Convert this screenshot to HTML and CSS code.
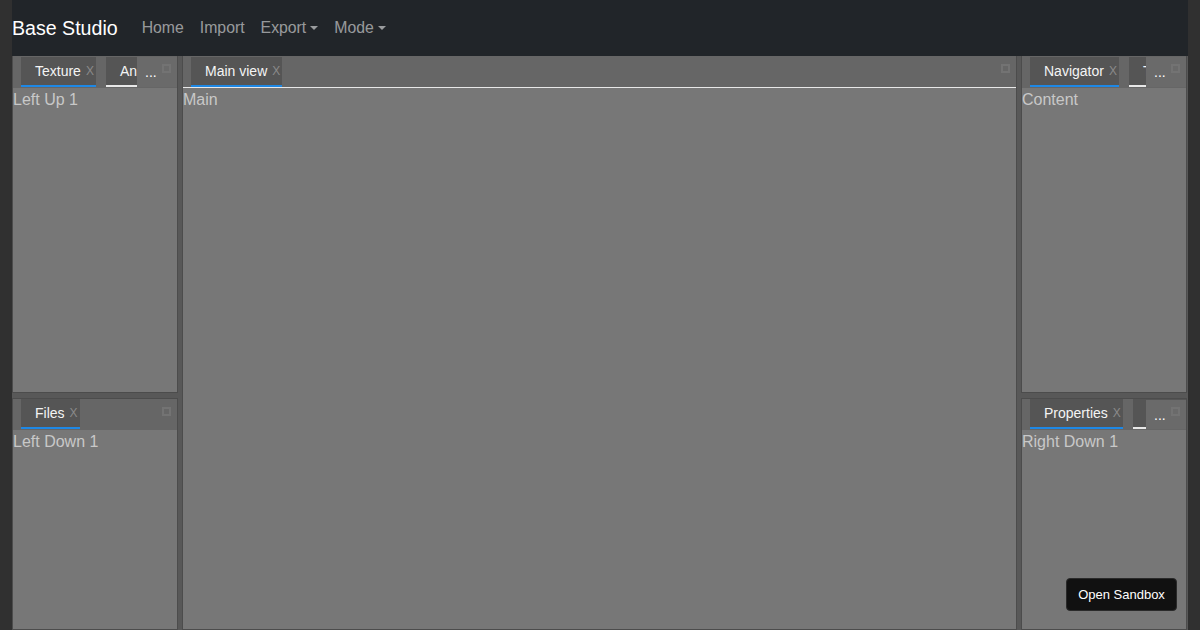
FILE: index.html
```
<html>
<head>
	<link rel="stylesheet" href="styles.css">
</head>
<body>
<div class="page">
	<nav class="navbar">
		<span class="brand">Base Studio</span>
		<a class="nav_link">Home</a>
		<a class="nav_link">Import</a>
		<a class="nav_link dropdown">Export</a>
		<a class="nav_link dropdown">Mode</a>
	</nav>
	<div class="layout">
		<div class="column">
			<div class="panel top">
				<div class="tabbar">
					<div class="tab active"><span class="tab_name">Texture</span><span class="tab_close">X</span></div>
					<div class="tab"><span class="tab_name">Animation</span><span class="tab_close">X</span></div>
					<div class="overflow">...</div>
					<div class="max"></div>
				</div>
				<div class="content">Left Up 1</div>
			</div>
			<div class="panel bottom">
				<div class="tabbar">
					<div class="tab active"><span class="tab_name">Files</span><span class="tab_close">X</span></div>
					<div class="max"></div>
				</div>
				<div class="content">Left Down 1</div>
			</div>
		</div>
		<div class="panel center">
			<div class="tabbar lined">
				<div class="tab active"><span class="tab_name">Main view</span><span class="tab_close">X</span></div>
				<div class="max"></div>
			</div>
			<div class="content">Main</div>
		</div>
		<div class="column">
			<div class="panel top">
				<div class="tabbar">
					<div class="tab active"><span class="tab_name">Navigator</span><span class="tab_close">X</span></div>
					<div class="tab"><span class="tab_name">Tree</span><span class="tab_close">X</span></div>
					<div class="overflow">...</div>
					<div class="max"></div>
				</div>
				<div class="content">Content</div>
			</div>
			<div class="panel bottom">
				<div class="tabbar">
					<div class="tab active"><span class="tab_name">Properties</span><span class="tab_close">X</span></div>
					<div class="tab"><span class="tab_name">Tools</span><span class="tab_close">X</span></div>
					<div class="overflow">...</div>
					<div class="max"></div>
				</div>
				<div class="content">Right Down 1</div>
			</div>
		</div>
	</div>
</div>
<button class="sandbox">Open Sandbox</button>
</body>
</html>
```

FILE: styles.css
```
	body{
		margin: 0;
		background-color: #303030;
		font-family: "Liberation Sans", Arial, sans-serif;
		overflow: hidden;
	}
	.page{
		margin: 0 12px;
		height: 630px;
		display: flex;
		flex-direction: column;
	}
	.navbar{
		height: 56px;
		flex: none;
		background-color: #212529;
		display: flex;
		align-items: center;
	}
	.brand{
		color: white;
		font-size: 19.6px;
		margin-right: 16px;
	}
	.nav_link{
		color: rgba(255,255,255,0.55);
		font-size: 15.8px;
		padding: 8px;
	}
	.dropdown::after{
		content: "";
		display: inline-block;
		margin-left: 4px;
		vertical-align: 3px;
		border-top: 4px solid;
		border-left: 4px solid transparent;
		border-right: 4px solid transparent;
	}
	.layout{
		flex: 1;
		min-height: 0;
		display: grid;
		grid-template-columns: 166px 835px 166px;
		gap: 4px;
		background-color: #585858;
	}
	.column{
		display: flex;
		flex-direction: column;
		gap: 5px;
		min-height: 0;
	}
	.panel{
		box-sizing: border-box;
		border: 1px solid #4c4c4c;
		border-top: 0;
		display: flex;
		flex-direction: column;
		background-color: #777;
		overflow: hidden;
	}
	.panel.top{
		height: 337px;
		flex: none;
	}
	.panel.bottom{
		flex: 1;
		border-top: 1px solid #4c4c4c;
	}
	.tabbar{
		position: relative;
		height: 32px;
		flex: none;
		box-sizing: border-box;
		background-color: #666;
		padding: 1px 0 1px 8px;
		display: flex;
		gap: 10px;
		overflow: hidden;
	}
	.bottom .tabbar{
		height: 31px;
		padding-top: 0;
	}
	.tabbar.lined{
		border-bottom: 1px solid #e8e8e8;
		padding-bottom: 0;
	}
	.tab{
		flex: none;
		display: flex;
		align-items: center;
		box-sizing: border-box;
		background-color: #555;
		padding: 0 2px 0 14px;
		border-bottom: 2px solid #e8e8e8;
	}
	.tab.active{
		border-bottom-color: #1e88e5;
	}
	.tab_name{
		color: #f4f4f4;
		font-size: 14px;
	}
	.tab_close{
		color: #8a8a8a;
		font-size: 12px;
		margin-left: 5px;
	}
	.overflow{
		position: absolute;
		right: 0;
		top: 1px;
		bottom: 1px;
		width: 32px;
		padding-left: 8px;
		background-color: #6a6a6a;
		color: white;
		font-size: 14px;
		line-height: 30px;
	}
	.max{
		position: absolute;
		right: 6px;
		top: 8px;
		width: 5px;
		height: 5px;
		border: 2px solid #737373;
	}
	.content{
		flex: 1;
		color: #c8c8c8;
		font-size: 16px;
		line-height: 24px;
	}
	.sandbox{
		position: fixed;
		right: 23px;
		bottom: 19px;
		width: 111px;
		height: 33px;
		background-color: #111;
		color: white;
		border: 1px solid #2a2a2a;
		border-radius: 4px;
		font-family: "Liberation Sans", Arial, sans-serif;
		font-size: 13px;
	}
```
